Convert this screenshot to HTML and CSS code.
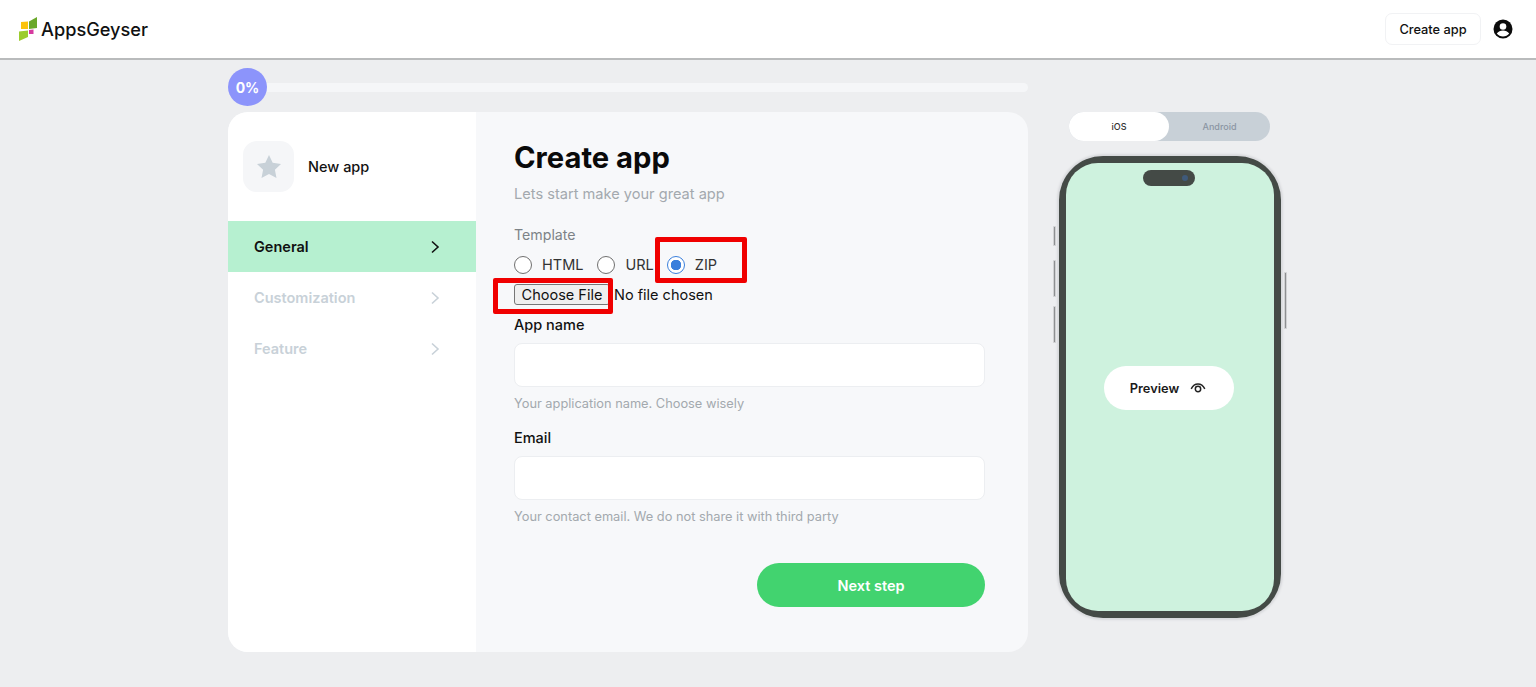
FILE: index.html

```html
<!DOCTYPE html>
<html lang="en">
<head>
    <meta charset="utf-8"/>
    <title>AppsGeyser - Create app</title>
    <link rel="stylesheet" href="styles.css">
</head>
<body>
    <header class="topbar">
        <a class="logo">
            <svg class="logo-mark" width="18" height="24" viewBox="0 0 18 24">
                <polygon points="2,5 9,4.500 9,12 2,12" fill="#fcc30b"/>
                <polygon points="10,4.500 18,0 18,11 10,12" fill="#6aa82a"/>
                <polygon points="0,14.500 9,13.500 9,20 0,24" fill="#9ccc2e"/>
                <polygon points="10,13 14.500,12.500 14.500,17 10,17" fill="#d63aa0"/>
            </svg>
            <span class="logo-text">AppsGeyser</span>
        </a>
        <div class="topbar-right">
            <a class="create-link">Create app</a>
            <svg class="account" width="20" height="20" viewBox="0 0 20 20">
                <circle cx="10" cy="10" r="9.500" fill="#0b0b0b"/>
                <circle cx="10" cy="7.500" r="3.300" fill="#fff"/>
                <path d="M3.800 14.600c1.400-2 3.700-3 6.200-3s4.800 1 6.200 3c-1.500 1.900-3.700 3-6.200 3s-4.700-1.100-6.200-3z" fill="#fff"/>
            </svg>
        </div>
    </header>

    <main class="page">
        <section class="left-col">
            <div class="progress">
                <div class="progress-bubble">0%</div>
                <div class="progress-track"></div>
            </div>
            <div class="card">
                <aside class="sidebar">
                    <div class="app-head">
                        <div class="app-icon">
                            <svg width="26" height="25" viewBox="0 0 26 25">
                                <path d="M13 1l3.700 7.800 8.300 1.100-6.100 5.800 1.600 8.300L13 20l-7.500 4 1.600-8.300L1 9.900l8.300-1.100z" fill="#c8d1d8"/>
                            </svg>
                        </div>
                        <span class="app-name">New app</span>
                    </div>
                    <nav class="steps">
                        <a class="step active">General
                            <svg width="10" height="14" viewBox="0 0 10 14"><path d="M2 1.500L8 7l-6 5.500" fill="none" stroke="#111" stroke-width="1.600"/></svg>
                        </a>
                        <a class="step">Customization
                            <svg width="10" height="14" viewBox="0 0 10 14"><path d="M2 1.500L8 7l-6 5.500" fill="none" stroke="#c8d1d8" stroke-width="1.600"/></svg>
                        </a>
                        <a class="step">Feature
                            <svg width="10" height="14" viewBox="0 0 10 14"><path d="M2 1.500L8 7l-6 5.500" fill="none" stroke="#c8d1d8" stroke-width="1.600"/></svg>
                        </a>
                    </nav>
                </aside>
                <form class="form">
                    <h1>Create app</h1>
                    <p class="lead">Lets start make your great app</p>
                    <div class="template-label">Template</div>
                    <div class="radios">
                        <label class="radio"><input type="radio" name="tpl"> HTML</label>
                        <label class="radio"><input type="radio" name="tpl"> URL</label>
                        <label class="radio radio-zip"><input type="radio" name="tpl" checked> ZIP</label>
                        <span class="mark mark-zip"></span>
                    </div>
                    <div class="file-row">
                        <button type="button" class="file-btn">Choose File</button>
                        <span>No file chosen</span>
                        <span class="mark mark-file"></span>
                    </div>
                    <label class="field-label first">App name</label>
                    <input class="text-input" type="text">
                    <div class="hint">Your application name. Choose wisely</div>
                    <label class="field-label">Email</label>
                    <input class="text-input" type="text">
                    <div class="hint">Your contact email. We do not share it with third party</div>
                    <div class="actions">
                        <button type="button" class="next-btn">Next step</button>
                    </div>
                </form>
            </div>
        </section>

        <section class="preview-col">
            <div class="os-toggle">
                <span class="os on">iOS</span>
                <span class="os">Android</span>
            </div>
            <div class="phone">
                <i class="side side-a"></i>
                <i class="side side-b"></i>
                <i class="side side-c"></i>
                <i class="side side-d"></i>
                <div class="screen">
                    <div class="island"><i class="lens"></i></div>
                    <a class="preview-btn">Preview
                        <svg width="16" height="12" viewBox="0 0 16 12">
                            <path d="M1.200 6.800C2.800 3.700 5.200 2 8 2s5.200 1.700 6.800 4.800" fill="none" stroke="#222" stroke-width="1.500"/>
                            <circle cx="8" cy="7" r="2.700" fill="none" stroke="#222" stroke-width="1.500"/>
                        </svg>
                    </a>
                </div>
            </div>
        </section>
    </main>
</body>
</html>
```

FILE: styles.css

```css
* {
    box-sizing: border-box;
}
html, body {
    margin: 0;
    height: 100%;
}
body {
    background: #edeef0;
    font-family: Inter, "Liberation Sans", sans-serif;
    color: #111;
    overflow: hidden;
}

/* top bar */
.topbar {
    height: 60px;
    background: #fff;
    border-bottom: 2px solid #b9bbbc;
    display: flex;
    align-items: center;
    justify-content: space-between;
    padding: 0 23px 0 19px;
}
.logo {
    display: flex;
    align-items: center;
    gap: 4px;
}
.logo-text {
    font-size: 18.200px;
    font-weight: 500;
}
.topbar-right {
    display: flex;
    align-items: center;
    gap: 12px;
}
.create-link {
    width: 96px;
    height: 32px;
    border: 1px solid #f1f2f4;
    border-radius: 7px;
    font-size: 12.800px;
    font-weight: 500;
    display: flex;
    align-items: center;
    justify-content: center;
}

/* page columns */
.page {
    display: flex;
    align-items: flex-start;
    padding: 8px 0 0 228px;
    gap: 29px;
}
.left-col {
    width: 800px;
}
.progress {
    height: 44px;
    padding-bottom: 6px;
    display: flex;
    align-items: center;
}
.progress-bubble {
    flex: none;
    width: 39px;
    height: 38px;
    border-radius: 50%;
    background: #8c94fb;
    color: #fff;
    font-size: 14px;
    font-weight: 700;
    display: flex;
    align-items: center;
    justify-content: center;
    position: relative;
    z-index: 1;
}
.progress-track {
    flex: 1;
    height: 9px;
    margin-left: -4px;
    margin-top: 1px;
    border-radius: 0 5px 5px 0;
    background: #f5f6f8;
}

/* card */
.card {
    display: flex;
    height: 540px;
    border-radius: 20px;
    overflow: hidden;
    background: #f7f8fa;
}
.sidebar {
    width: 248px;
    background: #fff;
    padding-top: 29px;
}
.app-head {
    display: flex;
    align-items: center;
    gap: 14px;
    padding-left: 15px;
}
.app-icon {
    width: 51px;
    height: 51px;
    border-radius: 14px;
    background: #f5f6f8;
    display: flex;
    align-items: center;
    justify-content: center;
}
.app-name {
    font-size: 14.500px;
    font-weight: 500;
}
.steps {
    margin-top: 29px;
}
.step {
    height: 51px;
    padding: 0 36px 0 26px;
    display: flex;
    align-items: center;
    justify-content: space-between;
    font-size: 14.500px;
    font-weight: 600;
    color: #c8d1d8;
}
.step.active {
    background: #b6f0d0;
    color: #111;
}

/* form */
.form {
    flex: 1;
    padding: 27px 43px 0 38px;
}
.form h1 {
    margin: 0;
    font-size: 29.200px;
    line-height: 38px;
    font-weight: 700;
    color: #0a0a0a;
}
.lead {
    margin: 8px 0 0;
    font-size: 14.600px;
    line-height: 18px;
    color: #a3a9ae;
}
.template-label {
    margin-top: 23px;
    font-size: 14.200px;
    line-height: 18px;
    color: #7d8387;
}
.radios {
    position: relative;
    display: flex;
    align-items: center;
    gap: 14px;
    height: 24px;
    margin-top: 8px;
}
.radio {
    display: flex;
    align-items: center;
    gap: 10px;
    font-size: 14.500px;
    color: #333;
}
.radio input {
    appearance: none;
    width: 18px;
    height: 18px;
    margin: 1px 0 0;
    border: 1.500px solid #6f6f6f;
    border-radius: 50%;
    background: #fff;
}
.radio input:checked {
    border-color: #3a7fdc;
    background: radial-gradient(circle, #3a7fdc 0 5px, #fff 5.500px);
}
.radio-zip {
    margin-left: -1px;
}
.file-row {
    position: relative;
    display: flex;
    align-items: center;
    gap: 4px;
    height: 22px;
    margin-top: 7px;
    font-size: 14.500px;
    color: #111;
}
.file-btn {
    height: 21px;
    width: 96px;
    padding: 0;
    font-family: inherit;
    font-size: 14.500px;
    color: #111;
    background: #efefef;
    border: 1px solid #767676;
    border-radius: 3px;
}
.mark {
    position: absolute;
    border: 5px solid #f00000;
    border-radius: 2px;
}
.mark-zip {
    left: 141px;
    top: -15px;
    width: 92px;
    height: 46px;
}
.mark-file {
    left: -21px;
    top: -5px;
    width: 120px;
    height: 36px;
}
.field-label {
    display: block;
    margin-top: 17px;
    font-size: 14.500px;
    line-height: 18px;
    font-weight: 500;
}
.field-label.first {
    margin-top: 11px;
}
.text-input {
    display: block;
    width: 100%;
    height: 44px;
    margin-top: 9px;
    background: #fff;
    border: 1px solid #eceef1;
    border-radius: 8px;
}
.hint {
    margin-top: 9px;
    font-size: 12.800px;
    line-height: 16px;
    color: #a3a9ae;
}
.actions {
    display: flex;
    justify-content: flex-end;
    margin-top: 38px;
}
.next-btn {
    width: 228px;
    height: 44px;
    border: 0;
    border-radius: 22px;
    background: #42d36f;
    color: #fff;
    font-family: inherit;
    font-size: 14.500px;
    font-weight: 600;
}

/* phone preview */
.preview-col {
    width: 226px;
    padding-top: 44px;
}
.os-toggle {
    display: flex;
    width: 201px;
    height: 29px;
    margin-left: 12px;
    border-radius: 15px;
    background: #c8d0d7;
    font-size: 9px;
    font-weight: 500;
    color: #8b95a3;
}
.os {
    flex: 1;
    display: flex;
    align-items: center;
    justify-content: center;
}
.os.on {
    flex: none;
    width: 100px;
    background: #fff;
    color: #333;
    border-radius: 15px;
}
.phone {
    position: relative;
    width: 222px;
    height: 462px;
    margin: 15px 0 0 2px;
    padding: 7px;
    border-radius: 44px;
    background: #444a46;
    box-shadow: 0 0 2px 2px #d9dadd;
}
.screen {
    height: 100%;
    border-radius: 32px;
    background: #cef2de;
    display: flex;
    flex-direction: column;
    align-items: center;
    justify-content: center;
    position: relative;
}
.island {
    position: absolute;
    top: 0;
    left: 77px;
    width: 52px;
    height: 16px;
    margin-top: 7px;
    border-radius: 8px;
    background: #444a46;
}
.lens {
    position: absolute;
    right: 7px;
    top: 5px;
    width: 6px;
    height: 6px;
    border-radius: 50%;
    background: #3f5a7a;
}
.preview-btn {
    width: 130px;
    height: 44px;
    margin: 2px 2px 0 0;
    padding-right: 2px;
    border-radius: 22px;
    background: #fff;
    font-size: 12.800px;
    font-weight: 600;
    display: flex;
    align-items: center;
    justify-content: center;
    gap: 11px;
    color: #1a1a1a;
}
.side {
    position: absolute;
    width: 3px;
    background: #8d8f91;
    border: 1px solid #d0d1d3;
    border-radius: 1px;
}
.side-a {
    left: -6px;
    top: 70px;
    height: 20px;
}
.side-b {
    left: -6px;
    top: 104px;
    height: 37px;
}
.side-c {
    left: -6px;
    top: 150px;
    height: 37px;
}
.side-d {
    right: -6px;
    top: 116px;
    height: 57px;
}
```
